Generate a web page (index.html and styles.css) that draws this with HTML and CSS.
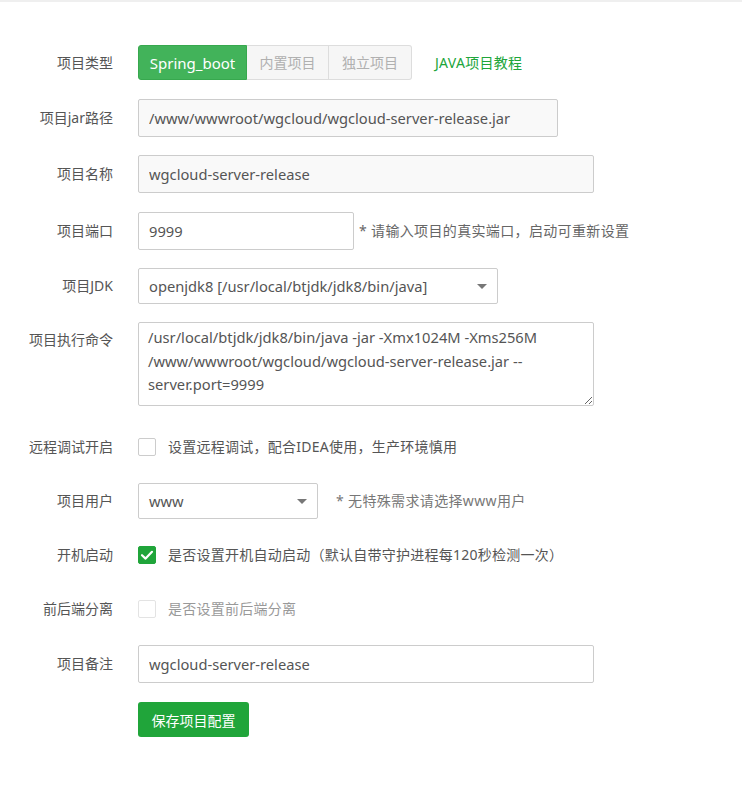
FILE: index.html
```html
<!DOCTYPE html>
<html lang="zh-CN">
<head>
<meta charset="utf-8">
<title>项目配置</title>
<link rel="stylesheet" href="styles.css">
</head>
<body>
<div class="topline"></div>
<form class="form">
  <div class="row r1">
    <label class="lbl">项目类型</label>
    <div class="ctrl">
      <div class="btn-group">
        <span class="seg active">Spring_boot</span>
        <span class="seg">内置项目</span>
        <span class="seg">独立项目</span>
      </div>
      <a class="link">JAVA项目教程</a>
    </div>
  </div>
  <div class="row">
    <label class="lbl">项目jar路径</label>
    <div class="ctrl"><input class="inp ro w-jar" value="/www/wwwroot/wgcloud/wgcloud-server-release.jar" readonly></div>
  </div>
  <div class="row r3">
    <label class="lbl">项目名称</label>
    <div class="ctrl"><input class="inp ro w-full" value="wgcloud-server-release" readonly></div>
  </div>
  <div class="row">
    <label class="lbl">项目端口</label>
    <div class="ctrl"><input class="inp w-port" value="9999"><span class="hint hint-port">* 请输入项目的真实端口，启动可重新设置</span></div>
  </div>
  <div class="row">
    <label class="lbl">项目JDK</label>
    <div class="ctrl"><div class="sel w-jdk"><span>openjdk8 [/usr/local/btjdk/jdk8/bin/java]</span><i class="caret"></i></div></div>
  </div>
  <div class="row row-top">
    <label class="lbl lbl-top">项目执行命令</label>
    <div class="ctrl"><textarea class="ta w-full">/usr/local/btjdk/jdk8/bin/java -jar -Xmx1024M -Xms256M /www/wwwroot/wgcloud/wgcloud-server-release.jar --server.port=9999</textarea></div>
  </div>
  <div class="row row-check">
    <label class="lbl">远程调试开启</label>
    <div class="ctrl"><span class="box"></span><span class="ctext">设置远程调试，配合IDEA使用，生产环境慎用</span></div>
  </div>
  <div class="row">
    <label class="lbl">项目用户</label>
    <div class="ctrl"><div class="sel w-user"><span>www</span><i class="caret"></i></div><span class="hint hint-user">* 无特殊需求请选择www用户</span></div>
  </div>
  <div class="row row-check">
    <label class="lbl">开机启动</label>
    <div class="ctrl"><span class="box checked"><svg width="18" height="18" viewBox="0 0 18 18"><polyline points="4,9.2 7.6,12.6 14,5.8" fill="none" stroke="#fff" stroke-width="2.2" stroke-linecap="round" stroke-linejoin="round"/></svg></span><span class="ctext">是否设置开机自动启动（默认自带守护进程每120秒检测一次）</span></div>
  </div>
  <div class="row row-check">
    <label class="lbl">前后端分离</label>
    <div class="ctrl"><span class="box disabled"></span><span class="ctext muted">是否设置前后端分离</span></div>
  </div>
  <div class="row">
    <label class="lbl">项目备注</label>
    <div class="ctrl"><input class="inp w-full" value="wgcloud-server-release"></div>
  </div>
  <div class="row row-btn">
    <span class="lbl"></span>
    <div class="ctrl"><button type="button" class="btn-save">保存项目配置</button></div>
  </div>
</form>
</body>
</html>
```
FILE: styles.css
```css
html, body {
  margin: 0;
  padding: 0;
  background: #fff;
}
body {
  font-family: "Noto Sans", "Noto Sans CJK SC", sans-serif;
  font-size: 14px;
  color: #555;
  line-height: 20px;
}
.topline {
  height: 2px;
  background: #efefef;
}
.form {
  padding-top: 43px;
}
.row {
  display: flex;
  align-items: center;
  margin-bottom: 18px;
}
.r1, .r3 {
  margin-bottom: 19px;
}
.row-top {
  align-items: flex-start;
  margin-bottom: 23px;
}
.row-check {
  height: 36px;
}
.row-btn {
  margin-top: 19px;
}
.lbl {
  width: 113px;
  flex: none;
  text-align: right;
  margin-right: 25px;
  color: #555;
}
.lbl-top {
  padding-top: 8px;
}
.ctrl {
  display: flex;
  align-items: center;
}
.btn-group {
  display: flex;
  height: 35px;
}
.seg {
  display: flex;
  align-items: center;
  justify-content: center;
  box-sizing: border-box;
  height: 35px;
  border: 1px solid #ddd;
  border-left: none;
  background: #f6f6f6;
  color: #b0b0b0;
}
.seg:nth-child(2) { width: 82px; }
.seg:nth-child(3) { width: 83px; border-radius: 0 3px 3px 0; }
.seg.active {
  width: 109px;
  background: #42b35a;
  border: 1px solid #37a84e;
  color: #fff;
  border-radius: 3px 0 0 3px;
  font-size: 15px;
}
.link {
  margin-left: 23px;
  color: #20a53a;
  text-decoration: none;
  letter-spacing: 0.3px;
}
.inp {
  box-sizing: border-box;
  height: 38px;
  border: 1px solid #ccc;
  border-radius: 2px;
  padding: 0 10px;
  font-family: inherit;
  font-size: 14.7px;
  color: #555;
  background: #fff;
  outline: none;
}
.inp.ro {
  background: #f9f9f9;
}
.w-jar { width: 420px; }
.w-full { width: 456px; }
.w-port { width: 216px; }
.hint {
  color: #666;
  letter-spacing: 0.35px;
}
.hint-port {
  margin-left: 5px;
}
.hint-user {
  margin-left: 18px;
  color: #777;
}
.sel {
  box-sizing: border-box;
  height: 36px;
  border: 1px solid #ccc;
  border-radius: 2px;
  padding: 0 10px;
  display: flex;
  align-items: center;
  justify-content: space-between;
  background: #fff;
  color: #555;
  font-size: 14.7px;
}
.w-jdk { width: 360px; }
.w-user { width: 180px; }
.caret {
  width: 0;
  height: 0;
  border-left: 5.5px solid transparent;
  border-right: 5.5px solid transparent;
  border-top: 5.5px solid #777;
}
.ta {
  box-sizing: border-box;
  height: 84px;
  border: 1px solid #ccc;
  border-radius: 2px;
  padding: 3px 9px;
  font-family: inherit;
  font-size: 14.7px;
  line-height: 23.5px;
  color: #555;
  background: #fff;
  resize: both;
  outline: none;
}
.box {
  box-sizing: border-box;
  width: 18px;
  height: 18px;
  border: 1px solid #ccc;
  border-radius: 2px;
  background: #fff;
  flex: none;
  display: flex;
}
.box.checked {
  background: #20a53a;
  border-color: #20a53a;
}
.box.checked svg {
  margin: -1px;
}
.box.disabled {
  border-color: #e3e3e3;
}
.ctext {
  margin-left: 12px;
  color: #555;
  letter-spacing: 0.25px;
}
.ctext.muted {
  color: #999;
}
.btn-save {
  box-sizing: border-box;
  width: 111px;
  height: 35px;
  border: none;
  border-radius: 3px;
  background: #20a53a;
  color: #fff;
  font-family: inherit;
  font-size: 14px;
  padding: 0;
  cursor: pointer;
}
```
